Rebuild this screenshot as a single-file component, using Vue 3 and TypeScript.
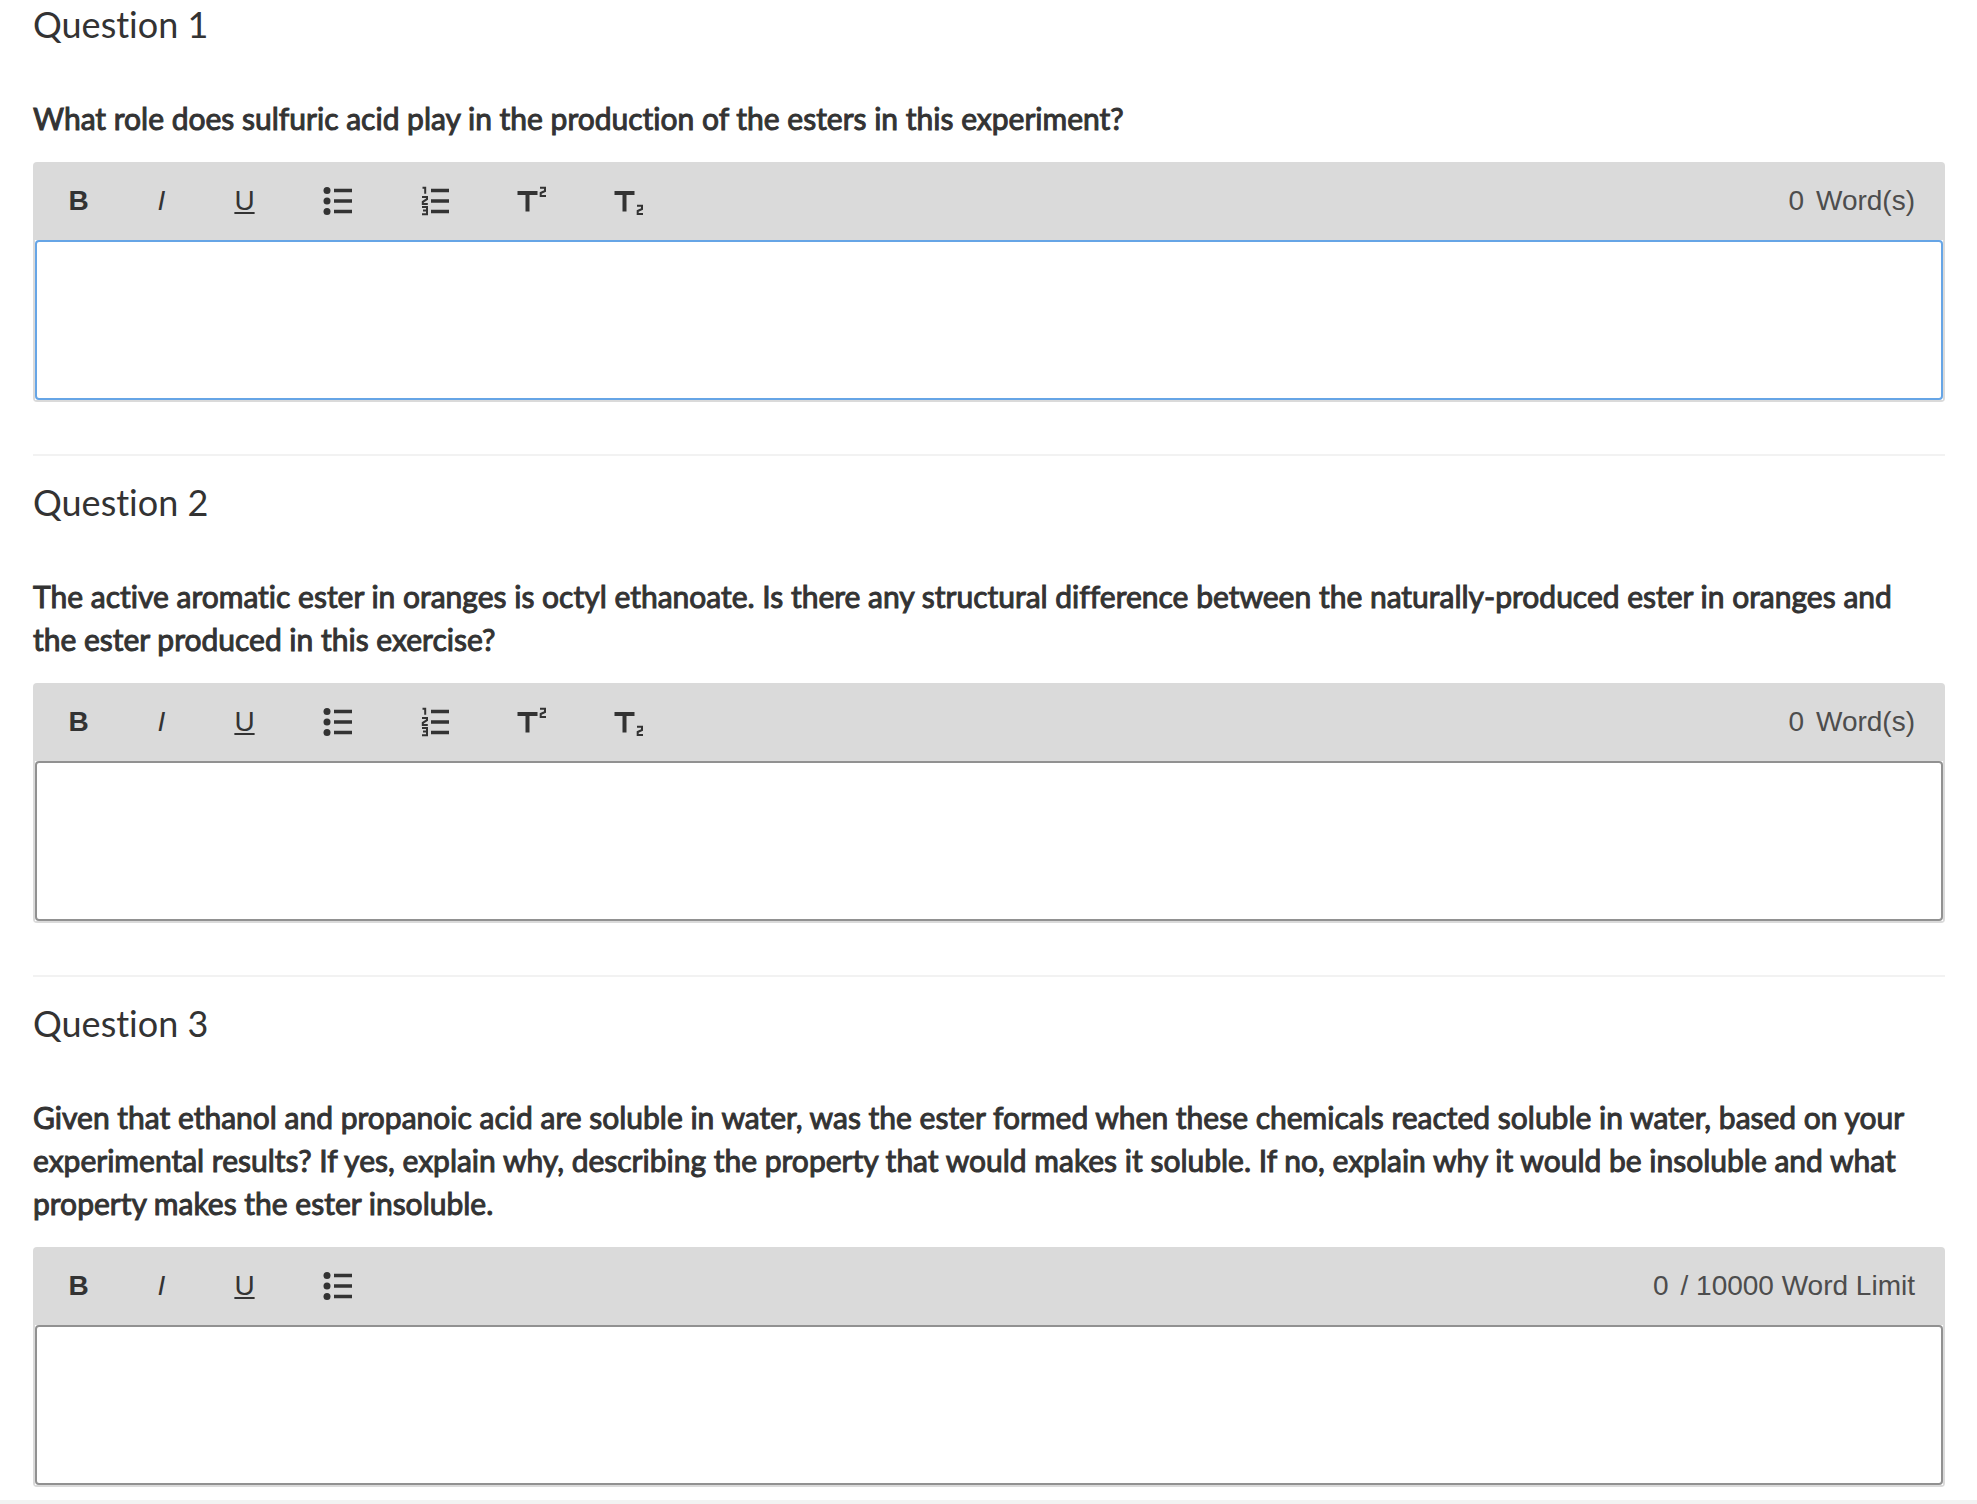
<script setup lang="ts">
import { ref } from 'vue'

interface Question {
  id: number
  prompt: string
  full: boolean
  limit?: number
  active?: boolean
}

const questions: Question[] = [
  {
    id: 1,
    prompt: 'What role does sulfuric acid play in the production of the esters in this experiment?',
    full: true,
    active: true,
  },
  {
    id: 2,
    prompt:
      'The active aromatic ester in oranges is octyl ethanoate. Is there any structural difference between the naturally-produced ester in oranges and the ester produced in this exercise?',
    full: true,
  },
  {
    id: 3,
    prompt:
      'Given that ethanol and propanoic acid are soluble in water, was the ester formed when these chemicals reacted soluble in water, based on your experimental results? If yes, explain why, describing the property that would makes it soluble. If no, explain why it would be insoluble and what property makes the ester insoluble.',
    full: false,
    limit: 10000,
  },
]

const answers = ref<string[]>(questions.map(() => ''))

function countWords(text: string): number {
  return text.split(/\s+/).filter(Boolean).length
}
</script>

<template>
  <main class="page">
    <section v-for="(q, i) in questions" :key="q.id" class="question">
      <h2 class="heading">Question {{ q.id }}</h2>
      <label class="prompt" :for="`answer-${q.id}`">{{ q.prompt }}</label>
      <div class="editor">
        <div class="toolbar">
          <div class="group">
            <button type="button" class="tool bold" aria-label="Bold">B</button>
            <button type="button" class="tool italic" aria-label="Italic">I</button>
            <button type="button" class="tool underline" aria-label="Underline">U</button>
          </div>
          <div class="group">
            <button type="button" class="tool wide" aria-label="Bulleted list">
              <svg viewBox="0 0 30 30" width="30" height="30">
                <circle cx="4" cy="4.5" r="3.5" />
                <circle cx="4" cy="15" r="3.5" />
                <circle cx="4" cy="25.5" r="3.5" />
                <path d="M11 2.7h18v3.6H11zM11 13.2h18v3.6H11zM11 23.7h18v3.6H11z" />
              </svg>
            </button>
            <template v-if="q.full">
              <button type="button" class="tool wide" aria-label="Numbered list">
                <svg viewBox="0 0 30 30" width="30" height="30">
                  <path d="M11 2.7h18v3.6H11zM11 13.2h18v3.6H11zM11 23.7h18v3.6H11z" />
                  <path
                    class="line"
                    d="M2.5 1.8h2.7v6M2 10.9h5v2.2l-4.2 2.8v2h5M2 20.9h5v7.4H2M3 24.6h4"
                  />
                </svg>
              </button>
              <button type="button" class="tool wide" aria-label="Superscript">
                <svg viewBox="0 0 30 30" width="30" height="30">
                  <path d="M.5 5h20v4h-8v16.5h-4V9h-8z" />
                  <path class="line" d="M23 1.8h5v3.2l-4.3 2v3h5.3" />
                </svg>
              </button>
              <button type="button" class="tool wide" aria-label="Subscript">
                <svg viewBox="0 0 30 30" width="30" height="30">
                  <path d="M.5 5h20v4h-8v16.5h-4V9h-8z" />
                  <path class="line" d="M23 19.8h5v3.2l-4.3 2v3h5.3" />
                </svg>
              </button>
            </template>
          </div>
          <div class="count">
            <span>{{ countWords(answers[i]) }}</span>
            <span v-if="q.limit">/ {{ q.limit }} Word Limit</span>
            <span v-else>Word(s)</span>
          </div>
        </div>
        <div class="field">
          <textarea
            :id="`answer-${q.id}`"
            v-model="answers[i]"
            class="answer"
            :class="{ active: q.active }"
          ></textarea>
        </div>
      </div>
    </section>
  </main>
</template>

<style>
body {
  margin: 0;
  background: #fff;
}
</style>

<style scoped>
.page {
  border-bottom: 4px solid #f2f2f2;
  padding: 3px 32px 13px 33px;
  color: #333;
  font-family: Lato, sans-serif;
  font-variant-ligatures: none;
}

.question + .question {
  margin-top: 52px;
  border-top: 2px solid #f2f2f2;
  padding-top: 25px;
}

.heading {
  margin: 0 0 51px;
  font-size: 36px;
  font-weight: 400;
  line-height: 43px;
}

.prompt {
  display: block;
  margin-bottom: 22px;
  padding-right: 12px;
  font-size: 30px;
  font-weight: 400;
  line-height: 43px;
  -webkit-text-stroke: 1px #333;
}

.editor {
  border-radius: 4px;
  background: #dadada;
  padding: 0 2px 2px;
}

.toolbar {
  display: flex;
  align-items: center;
  height: 78px;
  padding: 0 28px 0 2px;
  gap: 3px;
  font-family: "Liberation Sans", Arial, sans-serif;
  font-size: 28px;
}

.group {
  display: flex;
}

.tool {
  display: flex;
  align-items: center;
  justify-content: center;
  width: 83px;
  height: 78px;
  border: 0;
  background: none;
  padding: 0;
  color: #333;
  font: inherit;
  cursor: pointer;
}

.tool.wide {
  width: 97px;
}

.tool.bold {
  font-weight: 700;
}

.tool.italic {
  font-style: italic;
}

.underline {
  text-decoration: underline;
  text-decoration-thickness: 2px;
  text-underline-offset: 2px;
}

.tool svg {
  fill: #333;
}

.tool .line {
  fill: none;
  stroke: #333;
  stroke-width: 2;
}

.count {
  display: flex;
  gap: 12px;
  margin-left: auto;
  color: #4d4d4d;
}

.field {
  background: #fff;
}

.answer {
  display: block;
  box-sizing: border-box;
  width: 100%;
  height: 160px;
  border: 2px solid #919191;
  border-radius: 4px;
  background: #fff;
  padding: 12px;
  color: #333;
  font: inherit;
  font-size: 28px;
  resize: none;
  outline: none;
}

.answer.active,
.answer:focus {
  border-color: #66a5e6;
}
</style>
